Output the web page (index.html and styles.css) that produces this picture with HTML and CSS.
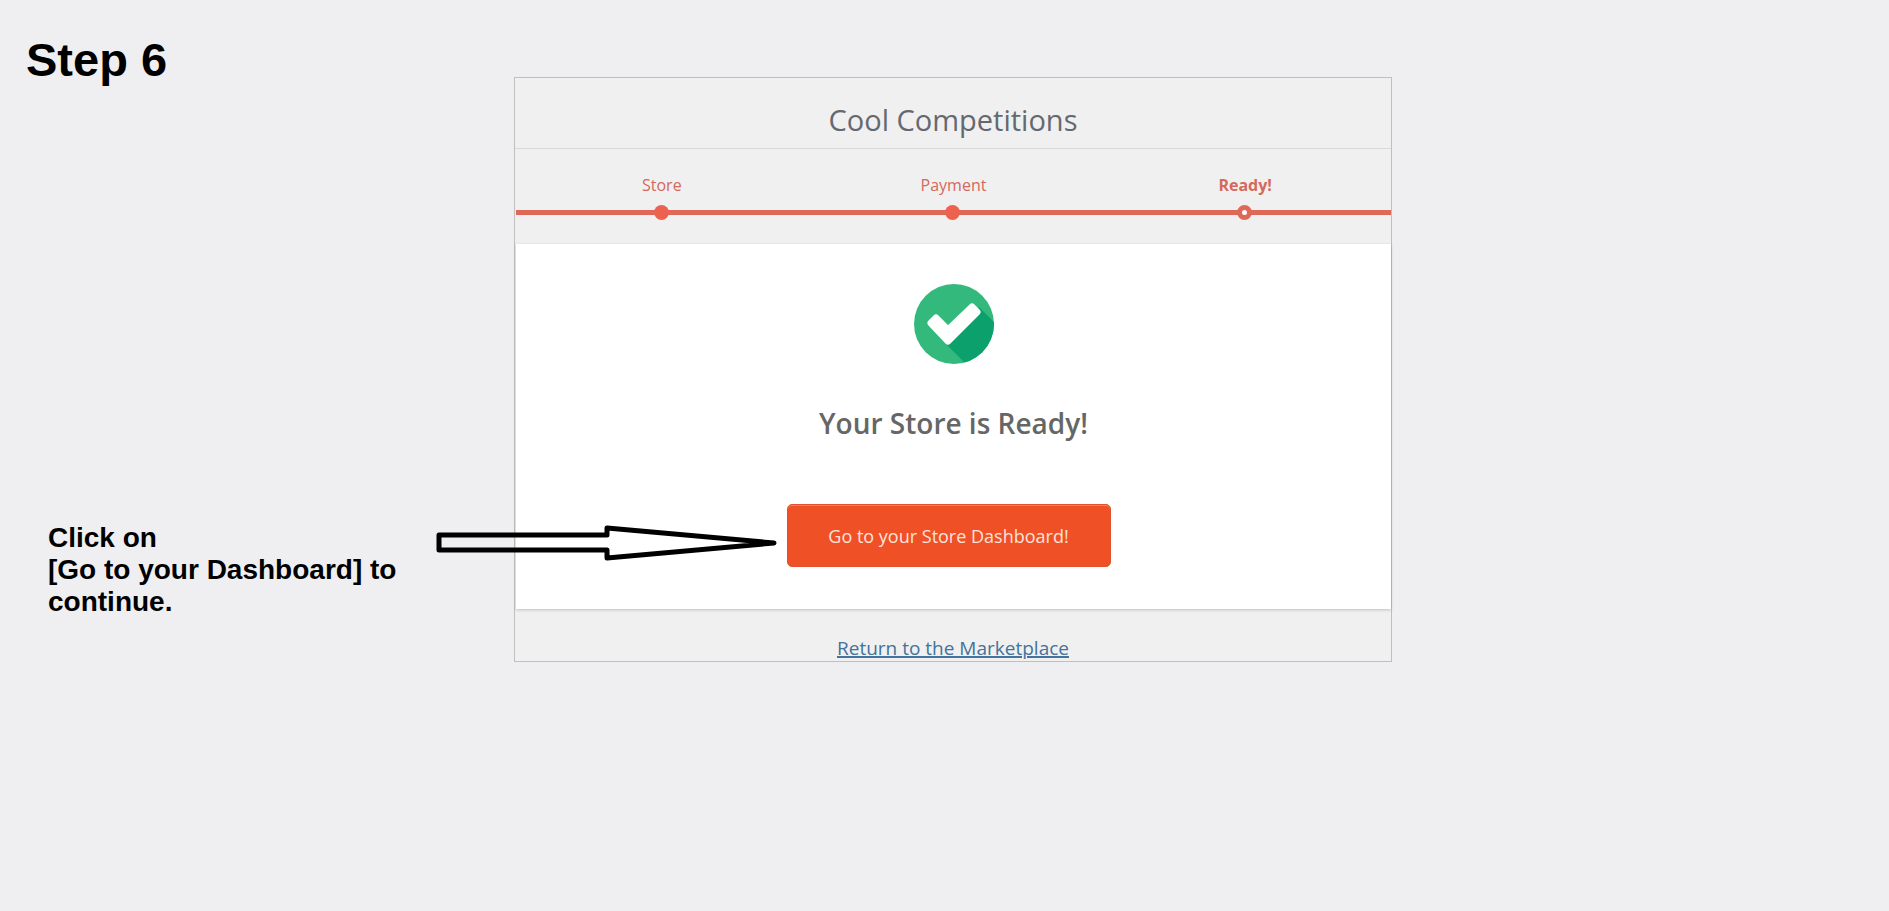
FILE: index.html
```html
<!DOCTYPE html>
<html lang="en">
<head>
    <meta charset="UTF-8">
    <meta name="viewport" content="width=device-width, initial-scale=1.0">
    <title>Step 6 - Your Store is Ready!</title>
    <link rel="stylesheet" href="styles.css">
</head>
<body>
    <div class="guide">
        <aside class="notes">
            <h1>Step 6</h1>
            <p>Click on<br>[Go to your Dashboard] to<br>continue.</p>
        </aside>

        <main class="wizard">
            <header class="wizard-title">Cool Competitions</header>

            <ol class="steps">
                <li class="done">Store</li>
                <li class="done">Payment</li>
                <li class="active">Ready!</li>
            </ol>

            <section class="card">
                <svg class="check" viewBox="0 0 80 80" aria-hidden="true">
                    <defs>
                        <clipPath id="disc"><circle cx="40" cy="40" r="40"/></clipPath>
                    </defs>
                    <circle cx="40" cy="40" r="40" fill="#33b97c"/>
                    <path d="M65 23 L90 48 V90 H62 L32 60 Z" fill="#0ba06c" clip-path="url(#disc)"/>
                    <path d="M17 39 L22 34 L34 46 L58 23 L63 28 L34 57 Z" fill="#fff" stroke="#fff" stroke-width="7" stroke-linejoin="round"/>
                </svg>
                <h2>Your Store is Ready!</h2>
                <div class="action">
                    <svg class="arrow" viewBox="0 0 340 36" aria-hidden="true">
                        <path d="M2 9 H170 V2 L337 17 L170 32 V24 H2 Z"/>
                    </svg>
                    <button type="button">Go to your Store Dashboard!</button>
                </div>
            </section>

            <footer class="wizard-footer">
                <a href="#">Return to the Marketplace</a>
            </footer>
        </main>
    </div>
</body>
</html>
```
FILE: styles.css
```css
*,
*::before,
*::after {
    box-sizing: border-box;
}

body {
    margin: 0;
    min-height: 100vh;
    background: #efeff1;
    font-family: 'Segoe UI', 'Open Sans', sans-serif;
}

.guide {
    display: grid;
    grid-template-columns: 514px minmax(0, 878px) 1fr;
    align-items: start;
}

/* left hand instructions */
.notes {
    padding: 32px 24px;
    color: #000;
    font-family: Arial, 'Liberation Sans', sans-serif;
    font-weight: bold;
}

.notes h1 {
    margin: 0 0 0 2px;
    font-size: 47px;
    line-height: 56px;
}

.notes p {
    margin: 434px 0 0 24px;
    font-size: 28px;
    line-height: 32px;
}

/* setup wizard */
.wizard {
    margin-top: 77px;
    border: 1px solid #bfbfc1;
    background: #f0f0f0;
}

.wizard-title {
    padding: 22px 0 8px;
    border-bottom: 1px solid #d8d8d9;
    color: #646970;
    font-size: 29px;
    line-height: 40px;
    text-align: center;
}

.steps {
    display: grid;
    grid-template-columns: repeat(3, 1fr);
    margin: 0 0 0 1px;
    padding: 24px 0;
    list-style: none;
    color: #d4695c;
    font-size: 16px;
    line-height: 24px;
    text-align: center;
}

.steps li {
    position: relative;
    padding-bottom: 23px;
}

.steps li::before {
    content: "";
    position: absolute;
    bottom: 5px;
    left: 0;
    width: 100%;
    height: 5px;
    background: #df6959;
}

.steps li::after {
    content: "";
    position: absolute;
    bottom: 0;
    left: 50%;
    width: 15px;
    height: 15px;
    margin-left: -8px;
    border-radius: 50%;
    background: #ec624e;
}

.steps .active {
    font-weight: bold;
}

.steps .active::after {
    border: 5px solid #df6959;
    background: #fff;
}

.card {
    display: flex;
    flex-direction: column;
    align-items: center;
    margin: 0 0 0 1px;
    padding: 40px 0 42px;
    background: #fff;
    box-shadow: 0 1px 3px rgba(0, 0, 0, 0.2);
}

.check {
    width: 80px;
    height: 80px;
}

.card h2 {
    margin: 38px 0 60px;
    color: #666;
    font-size: 28px;
    font-weight: 600;
    line-height: 42px;
}

.action {
    position: relative;
    margin-right: 10px;
}

.action button {
    display: block;
    width: 324px;
    height: 63px;
    border: 1px solid #e0532f;
    border-radius: 5px;
    background: #f05025;
    box-shadow: inset 0 1px 0 #f3805f;
    color: #fbe3dc;
    font-family: inherit;
    font-size: 18px;
    cursor: pointer;
}

.arrow {
    position: absolute;
    top: 22px;
    right: 100%;
    width: 340px;
    height: 36px;
    margin-right: 10px;
    fill: none;
    stroke: #000;
    stroke-width: 5px;
    stroke-linejoin: round;
    overflow: visible;
}

.wizard-footer {
    padding-top: 26px;
    font-size: 19px;
    line-height: 26px;
    text-align: center;
}

.wizard-footer a {
    color: #44739b;
    text-decoration-thickness: 2px;
}
```
